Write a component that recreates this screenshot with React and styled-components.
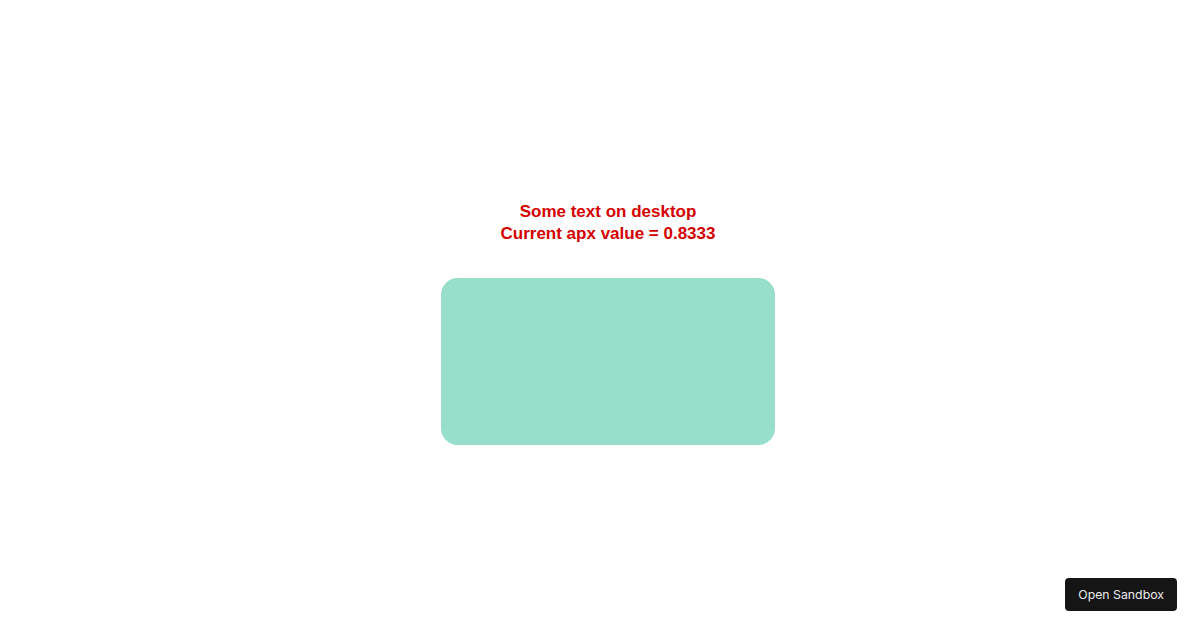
import React from "react";
import styled, { createGlobalStyle } from "styled-components";

const apx = 1200 / 1440;

const GlobalStyle = createGlobalStyle`
  body {
    margin: 8px;
    background: #ffffff;
    font-family: "Liberation Sans", Arial, sans-serif;
  }
`;

const Screen = styled.div`
  width: 100vw;
  height: 100vh;
  display: flex;
  flex-direction: column;
  align-items: center;
  justify-content: center;
`;

const Title = styled.div`
  color: #d40000;
  font-weight: 700;
  font-size: 17px;
  line-height: 22px;
  text-align: center;
`;

const Card = styled.div`
  width: ${400 * apx}px;
  height: ${200 * apx}px;
  margin-top: ${40 * apx}px;
  border-radius: ${20 * apx}px;
  background: #97dfca;
`;

const SandboxButton = styled.button`
  position: fixed;
  right: 23px;
  bottom: 19px;
  height: 33px;
  padding: 0 13px;
  border: none;
  border-radius: 4px;
  background: #151515;
  color: #ececec;
  font-family: Inter, "Liberation Sans", sans-serif;
  font-size: 12.3px;
  cursor: pointer;
`;

export default function App() {
  return (
    <>
      <GlobalStyle />
      <Screen>
        <Title>
          Some text on desktop
          <br />
          Current apx value = {apx.toFixed(4)}
        </Title>
        <Card />
      </Screen>
      <SandboxButton>Open Sandbox</SandboxButton>
    </>
  );
}
